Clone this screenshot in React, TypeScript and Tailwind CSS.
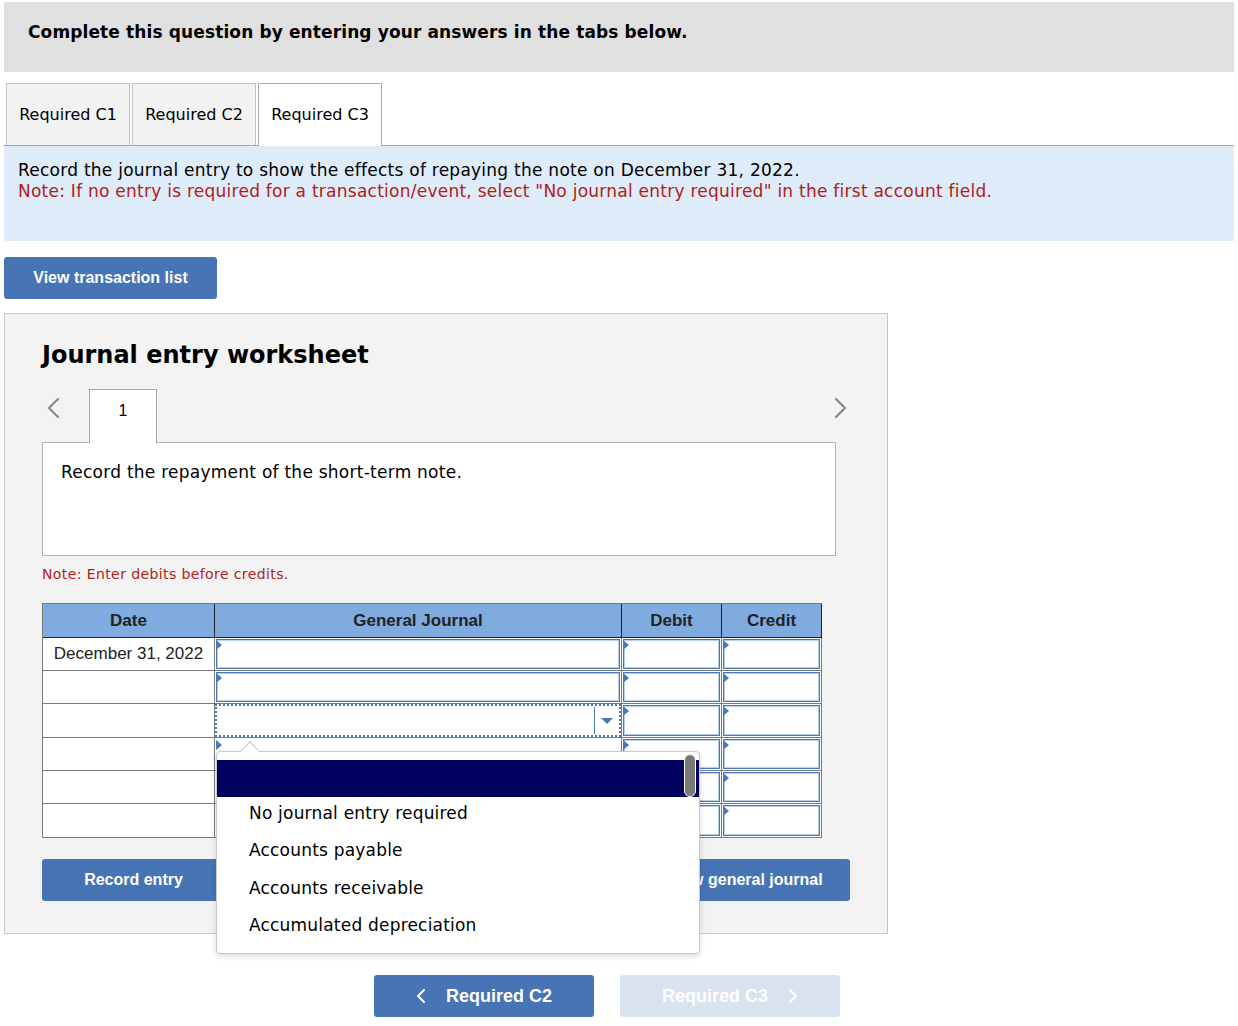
import React from 'react';

const verdana = "font-['Verdana','DejaVu_Sans',sans-serif]";
const arial = "font-['Arial','Liberation_Sans',sans-serif]";

function Marker() {
  return (
    <span className="absolute left-[1px] top-[2px] h-0 w-0 border-y-[5px] border-l-[6px] border-y-transparent border-l-[#4a78b8]" />
  );
}

function InputCell() {
  return (
    <div className="relative border-b border-r border-[#7a7a7a] bg-white p-[1px]">
      <div className="h-full w-full border border-[#4a78b8] shadow-[inset_0_0_0_1px_#b6cdeb]" />
      <Marker />
    </div>
  );
}

function Chevron({ dir }: { dir: 'left' | 'right' }) {
  return (
    <svg width="14" height="22" viewBox="0 0 14 22" fill="none">
      <path
        d={dir === 'left' ? 'M12 2 L3 11 L12 20' : 'M2 2 L11 11 L2 20'}
        stroke="#8c8c8c"
        strokeWidth="2.4"
        strokeLinecap="round"
        strokeLinejoin="round"
      />
    </svg>
  );
}

const options = [
  'No journal entry required',
  'Accounts payable',
  'Accounts receivable',
  'Accumulated depreciation',
];

export default function App() {
  const rows = [0, 1, 2, 3, 4, 5];
  return (
    <div className={`w-[1238px] min-h-[1026px] bg-white pt-[2px] text-black ${verdana}`}>
      <div className="mx-[4px] h-[70px] bg-[#e0e0e0] pl-[24px] pt-[19px] text-[17px] font-bold leading-[22px] tracking-[0.12px]">
        Complete this question by entering your answers in the tabs below.
      </div>

      <div className="ml-[4px] mt-[11px] flex h-[63px] w-[1230px] gap-[2px] border-b border-[#a8a8a8] pl-[2px] text-[16px]">
        <div className="flex w-[124px] items-center justify-center border border-b-0 border-[#c4c4c4] bg-[#f2f2f2]">Required C1</div>
        <div className="flex w-[124px] items-center justify-center border border-b-0 border-[#c4c4c4] bg-[#f2f2f2]">Required C2</div>
        <div className="-mb-px flex w-[124px] items-center justify-center border border-b-0 border-[#a8a8a8] bg-white">Required C3</div>
      </div>

      <div className="mx-[4px] h-[95px] bg-[#deebf8] pl-[14px] pt-[14px] text-[17px] leading-[21px] tracking-[0.25px]">
        <div>Record the journal entry to show the effects of repaying the note on December 31, 2022.</div>
        <div className="text-[#b1201b]">Note: If no entry is required for a transaction/event, select "No journal entry required" in the first account field.</div>
      </div>

      <button className={`ml-[4px] mt-[16px] flex h-[42px] w-[213px] items-center justify-center rounded-[3px] bg-[#4674b4] text-[16px] font-bold text-white ${arial}`}>
        View transaction list
      </button>

      <div className="ml-[4px] mt-[14px] h-[621px] w-[884px] border border-[#c8c8c8] bg-[#f3f3f3] pl-[37px]">
        <div className="pt-[26px] text-[24px] font-bold leading-[30px]">Journal entry worksheet</div>

        <div className="mt-[19px] flex h-[53px] w-[808px] items-start">
          <div className="flex w-[47px] justify-start pl-[4px] pt-[8px]">
            <Chevron dir="left" />
          </div>
          <div className={`-mb-px flex h-[54px] w-[68px] items-start justify-center border border-b-0 border-[#a8a8a8] bg-white pt-[9px] text-[16px] ${arial}`}>1</div>
          <div className="flex flex-1 justify-end pr-[2px] pt-[8px]">
            <Chevron dir="right" />
          </div>
        </div>

        <div className="h-[114px] w-[794px] border border-[#b3b3b3] bg-white pl-[18px] pt-[17px] text-[17px] leading-[24px] tracking-[0.25px]">
          Record the repayment of the short-term note.
        </div>

        <div className="mt-[9px] text-[14px] leading-[18px] tracking-[0.4px] text-[#b1201b]">Note: Enter debits before credits.</div>

        <div className={`relative mt-[20px] grid w-[780px] grid-cols-[172px_407px_100px_100px] border-l border-t border-[#7a7a7a] ${arial}`}>
          <div className="flex h-[34px] items-center justify-center border-b border-r border-[#222] bg-[#80abdf] text-[17px] font-bold text-[#222]">Date</div>
          <div className="flex h-[34px] items-center justify-center border-b border-r border-[#222] bg-[#80abdf] text-[17px] font-bold text-[#222]">General Journal</div>
          <div className="flex h-[34px] items-center justify-center border-b border-r border-[#222] bg-[#80abdf] text-[17px] font-bold text-[#222]">Debit</div>
          <div className="flex h-[34px] items-center justify-center border-b border-r border-[#222] bg-[#80abdf] text-[17px] font-bold text-[#222]">Credit</div>

          {rows.map((r) => (
            <React.Fragment key={r}>
              <div className={`flex items-center justify-center border-b border-r border-[#7a7a7a] bg-white text-[17px] text-[#222] ${r === 2 || r === 5 ? 'h-[34px]' : 'h-[33px]'}`}>
                {r === 0 ? 'December 31, 2022' : ''}
              </div>
              {r === 2 ? (
                <div className="relative border-b border-r border-[#7a7a7a] bg-white">
                  <div className="flex h-full w-full items-stretch justify-end border-2 border-dotted border-[#4a78b8]">
                    <div className="my-[1px] flex w-[25px] items-center justify-center border-l border-[#4a78b8]">
                      <span className="h-0 w-0 border-x-[6px] border-t-[6px] border-x-transparent border-t-[#4a78b8]" />
                    </div>
                  </div>
                </div>
              ) : r >= 3 ? (
                <div className="relative border-b border-r border-[#7a7a7a] bg-white">
                  {r === 3 && <Marker />}
                </div>
              ) : (
                <InputCell />
              )}
              <InputCell />
              <InputCell />
            </React.Fragment>
          ))}

          <div className={`absolute left-[173px] top-[147px] h-[203px] w-[484px] rounded-[4px] border border-[#c9c9c9] bg-white shadow-[0_2px_6px_rgba(0,0,0,0.15)] ${verdana}`}>
            <span className="absolute -top-[8px] left-[26px] h-[14px] w-[14px] rotate-45 border-l border-t border-[#c9c9c9] bg-white" />
            <div className="relative mt-[8px] h-[37px] bg-[#00005f]" />
            <div className="absolute right-[3px] top-[2px] h-[43px] w-[12px] rounded-full border border-white bg-[#787878]" />
            <div className="pl-[32px] pt-[4px] text-[17px] tracking-[0.2px]">
              {options.map((o) => (
                <div key={o} className="h-[37.3px] leading-[24px]">{o}</div>
              ))}
            </div>
          </div>
        </div>

        <div className={`mt-[21px] flex w-[808px] justify-between ${arial}`}>
          <button className="flex h-[42px] w-[183px] items-center justify-center rounded-[3px] bg-[#4674b4] text-[16px] font-bold text-white">Record entry</button>
          <button className="flex h-[42px] w-[210px] items-center justify-center rounded-[3px] bg-[#4674b4] text-[16px] font-bold text-white">View general journal</button>
        </div>
      </div>

      <div className={`ml-[374px] mt-[41px] flex gap-[26px] ${arial}`}>
        <button className="flex h-[42px] w-[220px] items-center justify-center gap-[20px] rounded-[3px] bg-[#4674b4] text-[18px] font-bold text-white">
          <svg width="10" height="16" viewBox="0 0 10 16" fill="none"><path d="M8 2 L2 8 L8 14" stroke="white" strokeWidth="2" strokeLinecap="round" strokeLinejoin="round" /></svg>
          Required C2
        </button>
        <button className="flex h-[42px] w-[220px] items-center justify-center gap-[20px] rounded-[3px] bg-[#d9e3ef] text-[18px] font-bold text-white">
          Required C3
          <svg width="10" height="16" viewBox="0 0 10 16" fill="none"><path d="M2 2 L8 8 L2 14" stroke="white" strokeWidth="2" strokeLinecap="round" strokeLinejoin="round" /></svg>
        </button>
      </div>
    </div>
  );
}
